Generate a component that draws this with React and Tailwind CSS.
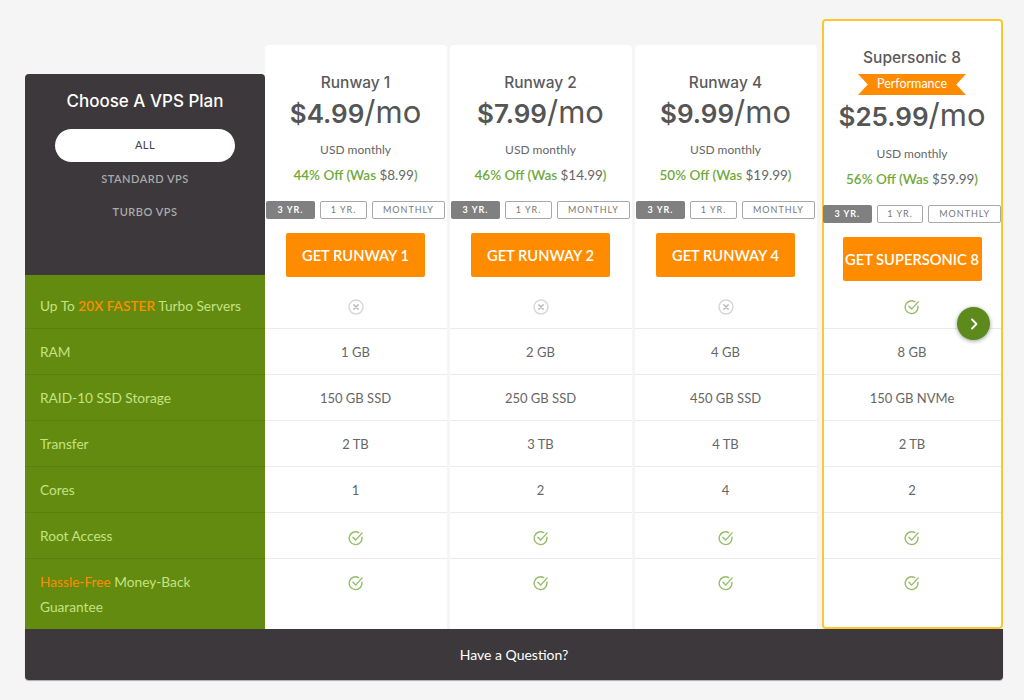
const plans = [
  { name: "Runway 1", price: "$4.99", off: "44% Off", was: "$8.99", cta: "GET RUNWAY 1", turbo: false, ram: "1 GB", disk: "150 GB SSD", transfer: "2 TB", cores: "1" },
  { name: "Runway 2", price: "$7.99", off: "46% Off", was: "$14.99", cta: "GET RUNWAY 2", turbo: false, ram: "2 GB", disk: "250 GB SSD", transfer: "3 TB", cores: "2" },
  { name: "Runway 4", price: "$9.99", off: "50% Off", was: "$19.99", cta: "GET RUNWAY 4", turbo: false, ram: "4 GB", disk: "450 GB SSD", transfer: "4 TB", cores: "4" },
];
const featured = { name: "Supersonic 8", price: "$25.99", off: "56% Off", was: "$59.99", cta: "GET SUPERSONIC 8", turbo: true, ram: "8 GB", disk: "150 GB NVMe", transfer: "2 TB", cores: "2" };

const CheckIcon = () => (
  <svg width="16" height="16" viewBox="0 0 16 16" fill="none" stroke="#95bd68" strokeWidth="1.4" strokeLinecap="round" strokeLinejoin="round">
    <path d="M13.9 7.2a6.4 6.4 0 1 1-3.2-4.6" />
    <path d="M4.9 7.3l2.7 2.8 6.6-7.2" />
  </svg>
);

const CrossIcon = () => (
  <svg width="16" height="16" viewBox="0 0 16 16" fill="none" stroke="#d8d8d8" strokeWidth="1.5" strokeLinecap="round">
    <circle cx="8" cy="8" r="7" />
    <path d="M5.9 5.9l4.2 4.2M10.1 5.9l-4.2 4.2" stroke="#bdbdbd" />
  </svg>
);

const Cell = ({ className, children }) => (
  <div className={`flex justify-center pr-[1px] text-[13px] text-[#666] ${className}`}>
    {children}
  </div>
);

const PlanHead = ({ plan, extra, priceClass = "mt-[1px]", usdClass = "mt-[12px]" }) => (
  <div className="flex flex-col items-center">
    <h3 className="text-[15.5px] leading-[20px] font-medium text-[#5a5a5a] font-['Inter',sans-serif]">{plan.name}</h3>
    {extra}
    <div className={`${priceClass} h-[36px] text-[31px] leading-[36px] text-[#555] font-['Inter',sans-serif] whitespace-nowrap`}>
      <span className="text-[26px] font-semibold">{plan.price}</span>/mo
    </div>
    <div className={`${usdClass} text-[12px] leading-[16px] text-[#666]`}>USD monthly</div>
    <div className="mt-[8px] text-[13.5px] leading-[18px] font-semibold text-[#6fa93a] whitespace-nowrap">
      {plan.off} (Was <span className="font-normal text-[#666]">{plan.was}</span>)
    </div>
    <div className="mt-[17px] w-full flex justify-between gap-[5px] text-[9px] tracking-[1px]">
      <span className="w-[49px] h-[18px] rounded-[2px] bg-[#808080] text-white font-bold flex items-center justify-center">3 YR.</span>
      <span className="w-[47px] h-[18px] rounded-[2px] border border-[#a8a8a8] text-[#777] flex items-center justify-center">1 YR.</span>
      <span className="w-[73px] h-[18px] rounded-[2px] border border-[#a8a8a8] text-[#777] flex items-center justify-center">MONTHLY</span>
    </div>
    <button className="mt-[14px] w-[139px] h-[44px] rounded-[2px] bg-[#ff8c00] text-white text-[14.7px] font-semibold whitespace-nowrap">
      {plan.cta}
    </button>
  </div>
);

const PlanCells = ({ plan, lastClass }) => (
  <>
    <Cell className="h-[54px] pt-[24px] items-start border-b border-[#ebebeb]">{plan.turbo ? <CheckIcon /> : <CrossIcon />}</Cell>
    <Cell className="h-[46px] pt-[2px] items-center border-b border-[#ebebeb]">{plan.ram}</Cell>
    <Cell className="h-[46px] pt-[2px] items-center border-b border-[#ebebeb]">{plan.disk}</Cell>
    <Cell className="h-[46px] pt-[2px] items-center border-b border-[#ebebeb]">{plan.transfer}</Cell>
    <Cell className="h-[46px] pt-[2px] items-center border-b border-[#ebebeb]">{plan.cores}</Cell>
    <Cell className="h-[46px] pt-[4px] items-center border-b border-[#ebebeb]"><CheckIcon /></Cell>
    <Cell className={`${lastClass} pt-[16px] items-start`}><CheckIcon /></Cell>
  </>
);

const features = ["RAM", "RAID-10 SSD Storage", "Transfer", "Cores", "Root Access"];

export default function App() {
  return (
    <div className="w-[1024px] h-[700px] overflow-hidden bg-[#f5f5f5] font-['Lato',sans-serif]">
      <div className="ml-[25px] w-[978px] pt-[19px]">
        <div className="flex items-end">
          {/* LEFT COLUMN */}
          <div className="w-[240px]">
            <div className="h-[201px] rounded-t-[4px] bg-[#3d383b] flex flex-col items-center pt-[16px]">
              <h2 className="text-[17px] leading-[22px] font-medium text-white font-['Inter',sans-serif]">Choose A VPS Plan</h2>
              <div className="mt-[17px] w-[180px] h-[33px] rounded-full bg-white text-[#444] text-[11px] tracking-[0.5px] flex items-center justify-center">ALL</div>
              <div className="mt-[9px] text-[11px] leading-[15px] font-semibold tracking-[0.5px] text-[#aaa]">STANDARD VPS</div>
              <div className="mt-[18px] text-[11px] leading-[15px] font-semibold tracking-[0.5px] text-[#aaa]">TURBO VPS</div>
            </div>
            <div className="bg-[#628b10] text-[13.7px] text-[#c5e383]">
              <div className="h-[54px] pl-[15px] pt-[10px] flex items-center border-b border-[#5a8010] whitespace-nowrap">
                <span>Up To <span className="text-[#ff8c00] font-semibold">20X FASTER</span> Turbo Servers</span>
              </div>
              {features.map((f) => (
                <div key={f} className="h-[46px] pl-[15px] pt-[2px] flex items-center border-b border-[#5a8010]">{f}</div>
              ))}
              <div className="h-[70px] pl-[15px] pt-[10px] leading-[25px]">
                <span className="text-[#ff8c00]">Hassle-Free</span> Money-Back<br />Guarantee
              </div>
            </div>
          </div>

          {/* PLAN COLUMNS */}
          <div className="flex gap-[3px] w-[552px]">
            {plans.map((plan) => (
              <div key={plan.name} className="w-[182px] rounded-t-[4px] bg-white">
                <div className="h-[230px] pt-[28px] pl-[1px] pr-[2px]">
                  <PlanHead plan={plan} />
                </div>
                <PlanCells plan={plan} lastClass="h-[70px]" />
              </div>
            ))}
          </div>

          <div className="relative ml-[5px] w-[181px] rounded-[4px] border-2 border-[#fbc72e] bg-white">
            <div className="h-[254px] pt-[27px] -ml-[1px]">
              <PlanHead
                plan={featured}
                priceClass="mt-[2px]"
                usdClass="mt-[13px]"
                extra={
                  <div
                    className="mt-[6px] w-[108px] h-[21px] bg-[#ff8c00] text-white text-[12.5px] flex items-center justify-center"
                    style={{ clipPath: "polygon(0 0, 100% 0, 91% 50%, 100% 100%, 0 100%, 9% 50%)" }}
                  >
                    Performance
                  </div>
                }
              />
            </div>
            <PlanCells plan={featured} lastClass="h-[68px]" />
            <div className="absolute left-[133px] top-[286px] w-[33px] h-[33px] rounded-full bg-[#5c8a1c] shadow-[0_1px_4px_rgba(0,0,0,0.4)] flex items-center justify-center">
              <svg width="12" height="12" viewBox="0 0 12 12" fill="none" stroke="white" strokeWidth="1.8" strokeLinecap="round" strokeLinejoin="round">
                <path d="M4 1.5L8.5 6 4 10.5" />
              </svg>
            </div>
          </div>
        </div>

        {/* FOOTER BAR */}
        <div className="h-[51px] rounded-b-[4px] bg-[#3d383b] text-white text-[14px] flex items-center justify-center shadow-[0_1px_1px_rgba(0,0,0,0.3)]">
          Have a Question?
        </div>
      </div>
    </div>
  );
}
